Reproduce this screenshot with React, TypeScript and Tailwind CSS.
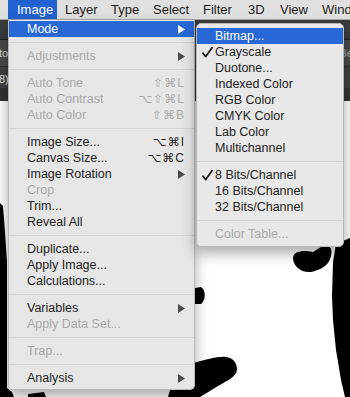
import React from "react";

type Row =
  | { sep: true }
  | {
      sep?: false;
      label: string;
      shortcut?: string;
      sub?: boolean;
      disabled?: boolean;
      active?: boolean;
      checked?: boolean;
    };

const IMAGE_MENU: Row[] = [
  { label: "Mode", sub: true, active: true },
  { sep: true },
  { label: "Adjustments", sub: true, disabled: true },
  { sep: true },
  { label: "Auto Tone", shortcut: "⇧⌘L", disabled: true },
  { label: "Auto Contrast", shortcut: "⌥⇧⌘L", disabled: true },
  { label: "Auto Color", shortcut: "⇧⌘B", disabled: true },
  { sep: true },
  { label: "Image Size...", shortcut: "⌥⌘I" },
  { label: "Canvas Size...", shortcut: "⌥⌘C" },
  { label: "Image Rotation", sub: true },
  { label: "Crop", disabled: true },
  { label: "Trim..." },
  { label: "Reveal All" },
  { sep: true },
  { label: "Duplicate..." },
  { label: "Apply Image..." },
  { label: "Calculations..." },
  { sep: true },
  { label: "Variables", sub: true },
  { label: "Apply Data Set...", disabled: true },
  { sep: true },
  { label: "Trap...", disabled: true },
  { sep: true },
  { label: "Analysis", sub: true },
];

const MODE_MENU: Row[] = [
  { label: "Bitmap...", active: true },
  { label: "Grayscale", checked: true },
  { label: "Duotone..." },
  { label: "Indexed Color" },
  { label: "RGB Color" },
  { label: "CMYK Color" },
  { label: "Lab Color" },
  { label: "Multichannel" },
  { sep: true },
  { label: "8 Bits/Channel", checked: true },
  { label: "16 Bits/Channel" },
  { label: "32 Bits/Channel" },
  { sep: true },
  { label: "Color Table...", disabled: true },
];

const MENUBAR = [
  { label: "Image", w: "w-[49px] pl-[9px]", active: true },
  { label: "Layer", w: "w-[46px] pl-[8px]" },
  { label: "Type", w: "w-[42px] pl-[8px]" },
  { label: "Select", w: "w-[50px] pl-[8px]" },
  { label: "Filter", w: "w-[45px] pl-[8px]" },
  { label: "3D", w: "w-[32px] pl-[8px]" },
  { label: "View", w: "w-[42px] pl-[8px]" },
  { label: "Window", w: "w-[60px] pl-[8px]" },
];

function Arrow({ white }: { white?: boolean }) {
  return (
    <svg width="7" height="9" viewBox="0 0 7 9">
      <polygon points="0,0 7,4.5 0,9" fill={white ? "#ffffff" : "#3a3a3a"} opacity={white ? 1 : 0.9} />
    </svg>
  );
}

function Check({ white }: { white?: boolean }) {
  return (
    <svg width="11" height="11" viewBox="0 0 11 11">
      <path
        d="M1 6.2 L3.8 9.6 L10 0.8"
        fill="none"
        stroke={white ? "#ffffff" : "#1e1e1e"}
        strokeWidth="1.8"
        strokeLinecap="round"
        strokeLinejoin="round"
      />
    </svg>
  );
}

function MenuRows({ rows }: { rows: Row[] }) {
  return (
    <>
      {rows.map((r, i) => {
        if (r.sep) {
          return (
            <div key={i} className="h-[11px] flex items-center">
              <div className="h-px w-full bg-[#d2d2d2]" />
            </div>
          );
        }
        const color = r.active ? "text-white" : r.disabled ? "text-[#a8a8a8]" : "text-[#222222]";
        return (
          <div
            key={i}
            className={`h-4 flex items-center pr-[9px] text-[12.5px] leading-none ${color} ${
              r.active ? "bg-[#2767d6]" : ""
            }`}
          >
            <div className="w-[18px] h-full flex items-center pl-[5px]">
              {r.checked && <Check white={r.active} />}
            </div>
            <span className="flex-1 whitespace-nowrap">{r.label}</span>
            {r.shortcut && (
              <span className="tracking-[1px] text-[12px] whitespace-nowrap">{r.shortcut}</span>
            )}
            {r.sub && <Arrow white={r.active} />}
          </div>
        );
      })}
    </>
  );
}

export default function App() {
  return (
    <div className="relative w-[350px] h-[397px] overflow-hidden flex flex-col bg-white font-['Liberation_Sans','DejaVu_Sans',sans-serif]">
      {/* menubar */}
      <div className="h-[20px] flex bg-[#e0e0e0] border-b border-[#a9a9a9] text-[13px] text-[#1c1c1c] shrink-0 overflow-hidden">
        <div className="w-[8px] shrink-0" />
        {MENUBAR.map((m) => (
          <div
            key={m.label}
            className={`${m.w} h-full flex items-center shrink-0 whitespace-nowrap ${
              m.active ? "bg-[#2261d0] text-white" : ""
            }`}
          >
            {m.label}
          </div>
        ))}
      </div>

      {/* photoshop panels behind */}
      <div className="h-[19px] bg-[#3b3b3b] shrink-0" />
      <div className="h-px bg-[#222222] shrink-0" />
      <div className="h-[26px] bg-[#4a4a4a] shrink-0 flex items-center justify-between text-[11px] text-[#dcdcdc] overflow-hidden">
        <span className="-ml-[1px]">to</span>
        <span className="-mr-[3px] text-[#aaaaaa]">Be</span>
      </div>
      <div className="h-px bg-[#2a2a2a] shrink-0" />
      <div className="h-[21px] bg-[#414141] shrink-0 flex items-center text-[11px] text-[#e6e6e6]">
        <span className="-ml-[1px] pt-[3px]">8)</span>
      </div>
      <div className="h-[13px] bg-[#333333] shrink-0" />

      {/* canvas */}
      <div className="relative flex-1 bg-white">
        <svg className="absolute inset-0" width="350" height="296" viewBox="0 101 350 296">
          <path d="M0 203 L3 206 L5 232 L7 262 L7 388 L12 392 L14 397 L0 397 Z" fill="#000" />
          <path d="M28 394 L44 392 L46 397 L28 397 Z" fill="#000" />
          <path
            d="M293 258 C293 251 304 250 313 252 L321 247 C329 243 333 248 331 256 C329 266 320 270 311 272 C301 273 293 266 293 258 Z"
            fill="#000"
          />
          <path d="M195 288 L201 287 C206 290 206 300 201 304 L195 304 Z" fill="#000" />
          <path
            d="M336 244 L350 238 L350 397 L345 397 L341 380 L336 350 L333 320 L332 296 L333 262 Z"
            fill="#000"
          />
          <path
            d="M170 390 L190 364 C205 360 218 356 226 357 C233 358 237 362 237 370 C236 377 228 380 218 386 L205 394 L200 397 L168 397 Z"
            fill="#000"
          />
        </svg>
      </div>

      {/* Image menu */}
      <div className="absolute left-[8px] top-[20px] w-[187px] pt-px pb-[3px] bg-[#e6e6e6] rounded-b-[5px] border-x border-b border-[#b8b8b8] shadow-[0_6px_14px_rgba(0,0,0,0.35)]">
        <MenuRows rows={IMAGE_MENU} />
      </div>

      {/* Mode submenu */}
      <div className="absolute left-[196px] top-[23px] w-[148px] py-[4px] bg-[#e8e8e8] rounded-[5px] border border-[#b8b8b8] shadow-[0_6px_14px_rgba(0,0,0,0.35)]">
        <MenuRows rows={MODE_MENU} />
      </div>
    </div>
  );
}
